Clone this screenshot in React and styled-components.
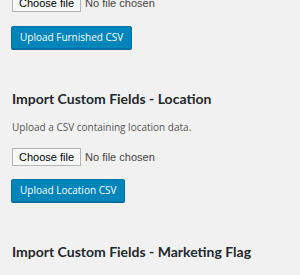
import React from "react";
import styled, { createGlobalStyle } from "styled-components";

const GlobalStyle = createGlobalStyle`
  html, body {
    margin: 0;
    padding: 0;
    background: #f1f1f1;
  }
  body {
    font-family: "Open Sans", "Noto Sans", sans-serif;
    color: #444;
    overflow: hidden;
  }
`;

const Page = styled.div`
  display: flex;
  flex-direction: column;
  align-items: flex-start;
  padding: 0 11px;
  margin-top: -6px;
`;

const FileRow = styled.div`
  display: flex;
  align-items: center;
  height: 18px;
  padding-left: 1px;
  margin-bottom: ${(p) => p.$gap || 0}px;
`;

const ChooseButton = styled.button`
  box-sizing: border-box;
  height: 18px;
  padding: 0 6px;
  margin: 0;
  font-family: "Liberation Sans", Arial, sans-serif;
  font-size: 11px;
  color: #000;
  background: #f9f9f9;
  border: 1px solid #b4b4b4;
  border-radius: 0;
  line-height: 16px;
`;

const NoFile = styled.span`
  margin-left: 4px;
  font-family: "Liberation Sans", Arial, sans-serif;
  font-size: 11px;
  color: #444;
`;

const PrimaryButton = styled.button`
  box-sizing: border-box;
  height: 23px;
  padding: 0 8px;
  margin: 0;
  font-family: "Open Sans", "Noto Sans", sans-serif;
  font-size: 10px;
  line-height: 21px;
  color: #fff;
  background: #0085ba;
  border: 1px solid #0073aa;
  border-radius: 2px;
  box-shadow: 0 1px 0 #006799;
  white-space: nowrap;
`;

const Heading = styled.h2`
  margin: ${(p) => p.$top}px 0 0 1px;
  font-family: Lato, "Open Sans", sans-serif;
  font-size: 14px;
  line-height: 18px;
  font-weight: 700;
  color: #23282d;
`;

const Note = styled.p`
  margin: 12px 0 14px 1px;
  font-size: 10px;
  line-height: 14px;
  color: #555;
`;

function FileInput({ gap }) {
  return (
    <FileRow $gap={gap}>
      <ChooseButton>Choose file</ChooseButton>
      <NoFile>No file chosen</NoFile>
    </FileRow>
  );
}

export default function App() {
  return (
    <>
      <GlobalStyle />
      <Page>
        <FileInput gap={14} />
        <PrimaryButton>Upload Furnished CSV</PrimaryButton>

        <Heading $top={41}>Import Custom Fields - Location</Heading>
        <Note>Upload a CSV containing location data.</Note>
        <FileInput gap={13} />
        <PrimaryButton>Upload Location CSV</PrimaryButton>

        <Heading $top={41}>Import Custom Fields - Marketing Flag</Heading>
      </Page>
    </>
  );
}
